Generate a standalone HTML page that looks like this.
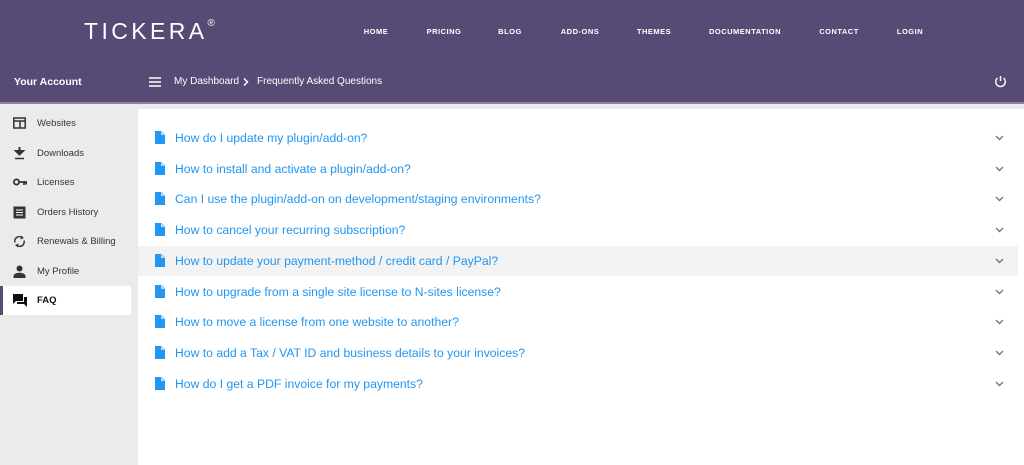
<!DOCTYPE html>
<html><head><meta charset="utf-8"><style>
*{margin:0;padding:0;box-sizing:border-box}
body{width:1024px;height:465px;overflow:hidden;background:#ebebeb;font-family:"Liberation Sans",sans-serif;position:relative}
.hdr{position:absolute;left:0;top:0;width:1024px;height:102px;background:#574a74}
.line{position:absolute;left:0;top:102px;width:1024px;height:2px;background:#8d84a3}
.logo{position:absolute;left:84px;top:18px;color:#fff;font-size:23px;letter-spacing:3.4px;font-weight:400}
.logo sup{font-size:10px;letter-spacing:0;position:relative;top:-4px}
.nav{position:absolute;top:27px;color:#fff;font-size:7.5px;font-weight:bold;letter-spacing:.5px;transform:translateX(-50%)}
.acct{position:absolute;left:14px;top:76px;color:#fff;font-size:10.5px;font-weight:bold}
.bc{position:absolute;top:76px;color:#fff;font-size:10px}
.side{position:absolute;left:0;width:131px;height:29px;font-size:9.5px;color:#333}
.side span{position:absolute;left:37px;top:9px}
.side svg{position:absolute;left:13px;top:8px}
.act{background:#fff;border-left:3px solid #574a74;font-weight:bold;color:#111}
.act svg{left:10px}
.act span{left:34px}
.panel{position:absolute;left:138px;top:109px;width:886px;height:356px;background:#fff}
.row{position:absolute;left:138px;width:880px;height:30px}
.row.hl{background:#f3f3f3}
.row svg.doc{position:absolute;left:17px;top:8px}
.row .t{position:absolute;left:37px;top:8px;color:#2196f3;font-size:12.2px;white-space:nowrap}
.row svg.ch{position:absolute;left:857px;top:12px}
</style></head><body>
<div class="hdr"></div><div class="line"></div>
<div class="logo">TICKERA<sup>®</sup></div>
<div class="nav" style="left:376px">HOME</div>
<div class="nav" style="left:444px">PRICING</div>
<div class="nav" style="left:510px">BLOG</div>
<div class="nav" style="left:580px">ADD-ONS</div>
<div class="nav" style="left:654px">THEMES</div>
<div class="nav" style="left:745px">DOCUMENTATION</div>
<div class="nav" style="left:839px">CONTACT</div>
<div class="nav" style="left:910px">LOGIN</div>
<div class="acct">Your Account</div>
<svg style="position:absolute;left:149px;top:77px" width="12" height="10"><path d="M0 1h12M0 5h12M0 9h12" stroke="#fff" stroke-width="1.4"/></svg>
<div class="bc" style="left:174px">My Dashboard</div>
<svg style="position:absolute;left:243px;top:78px" width="6" height="8"><path d="M1 0.5l3.5 3.5L1 7.5" stroke="#fff" stroke-width="1.5" fill="none"/></svg>
<div class="bc" style="left:257px">Frequently Asked Questions</div>
<svg style="position:absolute;left:994px;top:75px" width="13" height="13" viewBox="0 0 13 13"><path d="M6.5 1v5M3.5 3A4.8 4.8 0 1 0 9.5 3" stroke="#fff" stroke-width="1.4" fill="none"/></svg>

<div class="side" style="top:109px"><svg width="13" height="12"><rect x="0.8" y="1" width="11.4" height="10" fill="none" stroke="#333" stroke-width="1.5"/><path d="M1 4h11M7 4v7" stroke="#333" stroke-width="1.5"/></svg><span>Websites</span></div>
<div class="side" style="top:139px"><svg width="13" height="13"><path d="M6.5 0v7M3 4l3.5 3.5L10 4z" stroke="#333" stroke-width="2" fill="#333"/><path d="M2 11.5h9" stroke="#333" stroke-width="1.5"/></svg><span>Downloads</span></div>
<div class="side" style="top:168px"><svg width="14" height="12"><circle cx="3.5" cy="6" r="2.6" fill="none" stroke="#333" stroke-width="1.8"/><path d="M6 6h8M11 6v3M13 6v2.5" stroke="#333" stroke-width="1.8"/></svg><span>Licenses</span></div>
<div class="side" style="top:198px"><svg width="13" height="13"><rect x="0.5" y="0.5" width="12" height="12" fill="#333"/><path d="M3 4h7M3 6.5h7M3 9h7" stroke="#fff" stroke-width="1"/></svg><span>Orders History</span></div>
<div class="side" style="top:227px"><svg width="13" height="13" viewBox="0 0 13 13"><path d="M2 7.5A4.5 4.5 0 0 1 9.5 3M11 5.5A4.5 4.5 0 0 1 3.5 10" stroke="#333" stroke-width="1.5" fill="none"/><path d="M8 0.5l3 2.5-3.5 1.5zM5 12.5l-3-2.5 3.5-1.5z" fill="#333"/></svg><span>Renewals &amp; Billing</span></div>
<div class="side" style="top:257px"><svg width="13" height="13"><circle cx="6.5" cy="3.5" r="3" fill="#333"/><path d="M0.5 13v-2c0-2 3-3.3 6-3.3s6 1.3 6 3.3v2z" fill="#333"/></svg><span>My Profile</span></div>
<div class="side act" style="top:286px"><svg width="14" height="13"><path d="M0 0h10v7H3L0 10z" fill="#111"/><path d="M11 3h3v10l-3-3H4V8h7z" fill="#111"/></svg><span>FAQ</span></div>

<div class="panel"></div>
<div id="rows"></div>
<script>
var q=["How do I update my plugin/add-on?","How to install and activate a plugin/add-on?","Can I use the plugin/add-on on development/staging environments?","How to cancel your recurring subscription?","How to update your payment-method / credit card / PayPal?","How to upgrade from a single site license to N-sites license?","How to move a license from one website to another?","How to add a Tax / VAT ID and business details to your invoices?","How do I get a PDF invoice for my payments?"];
var h="";q.forEach(function(t,i){var top=Math.round(123+i*30.7);h+='<div class="row'+(i==4?' hl':'')+'" style="top:'+top+'px"><svg class="doc" width="10" height="13"><path d="M0 0h6.5L10 3.5V13H0z" fill="#2196f3"/><path d="M6 0v4h4" fill="#bfe0fb"/></svg><div class="t">'+t+'</div><svg class="ch" width="9" height="6"><path d="M1 1l3.5 3.5L8 1" stroke="#777" stroke-width="1.4" fill="none"/></svg></div>';});
document.getElementById("rows").innerHTML=h;
</script>
</body></html>
